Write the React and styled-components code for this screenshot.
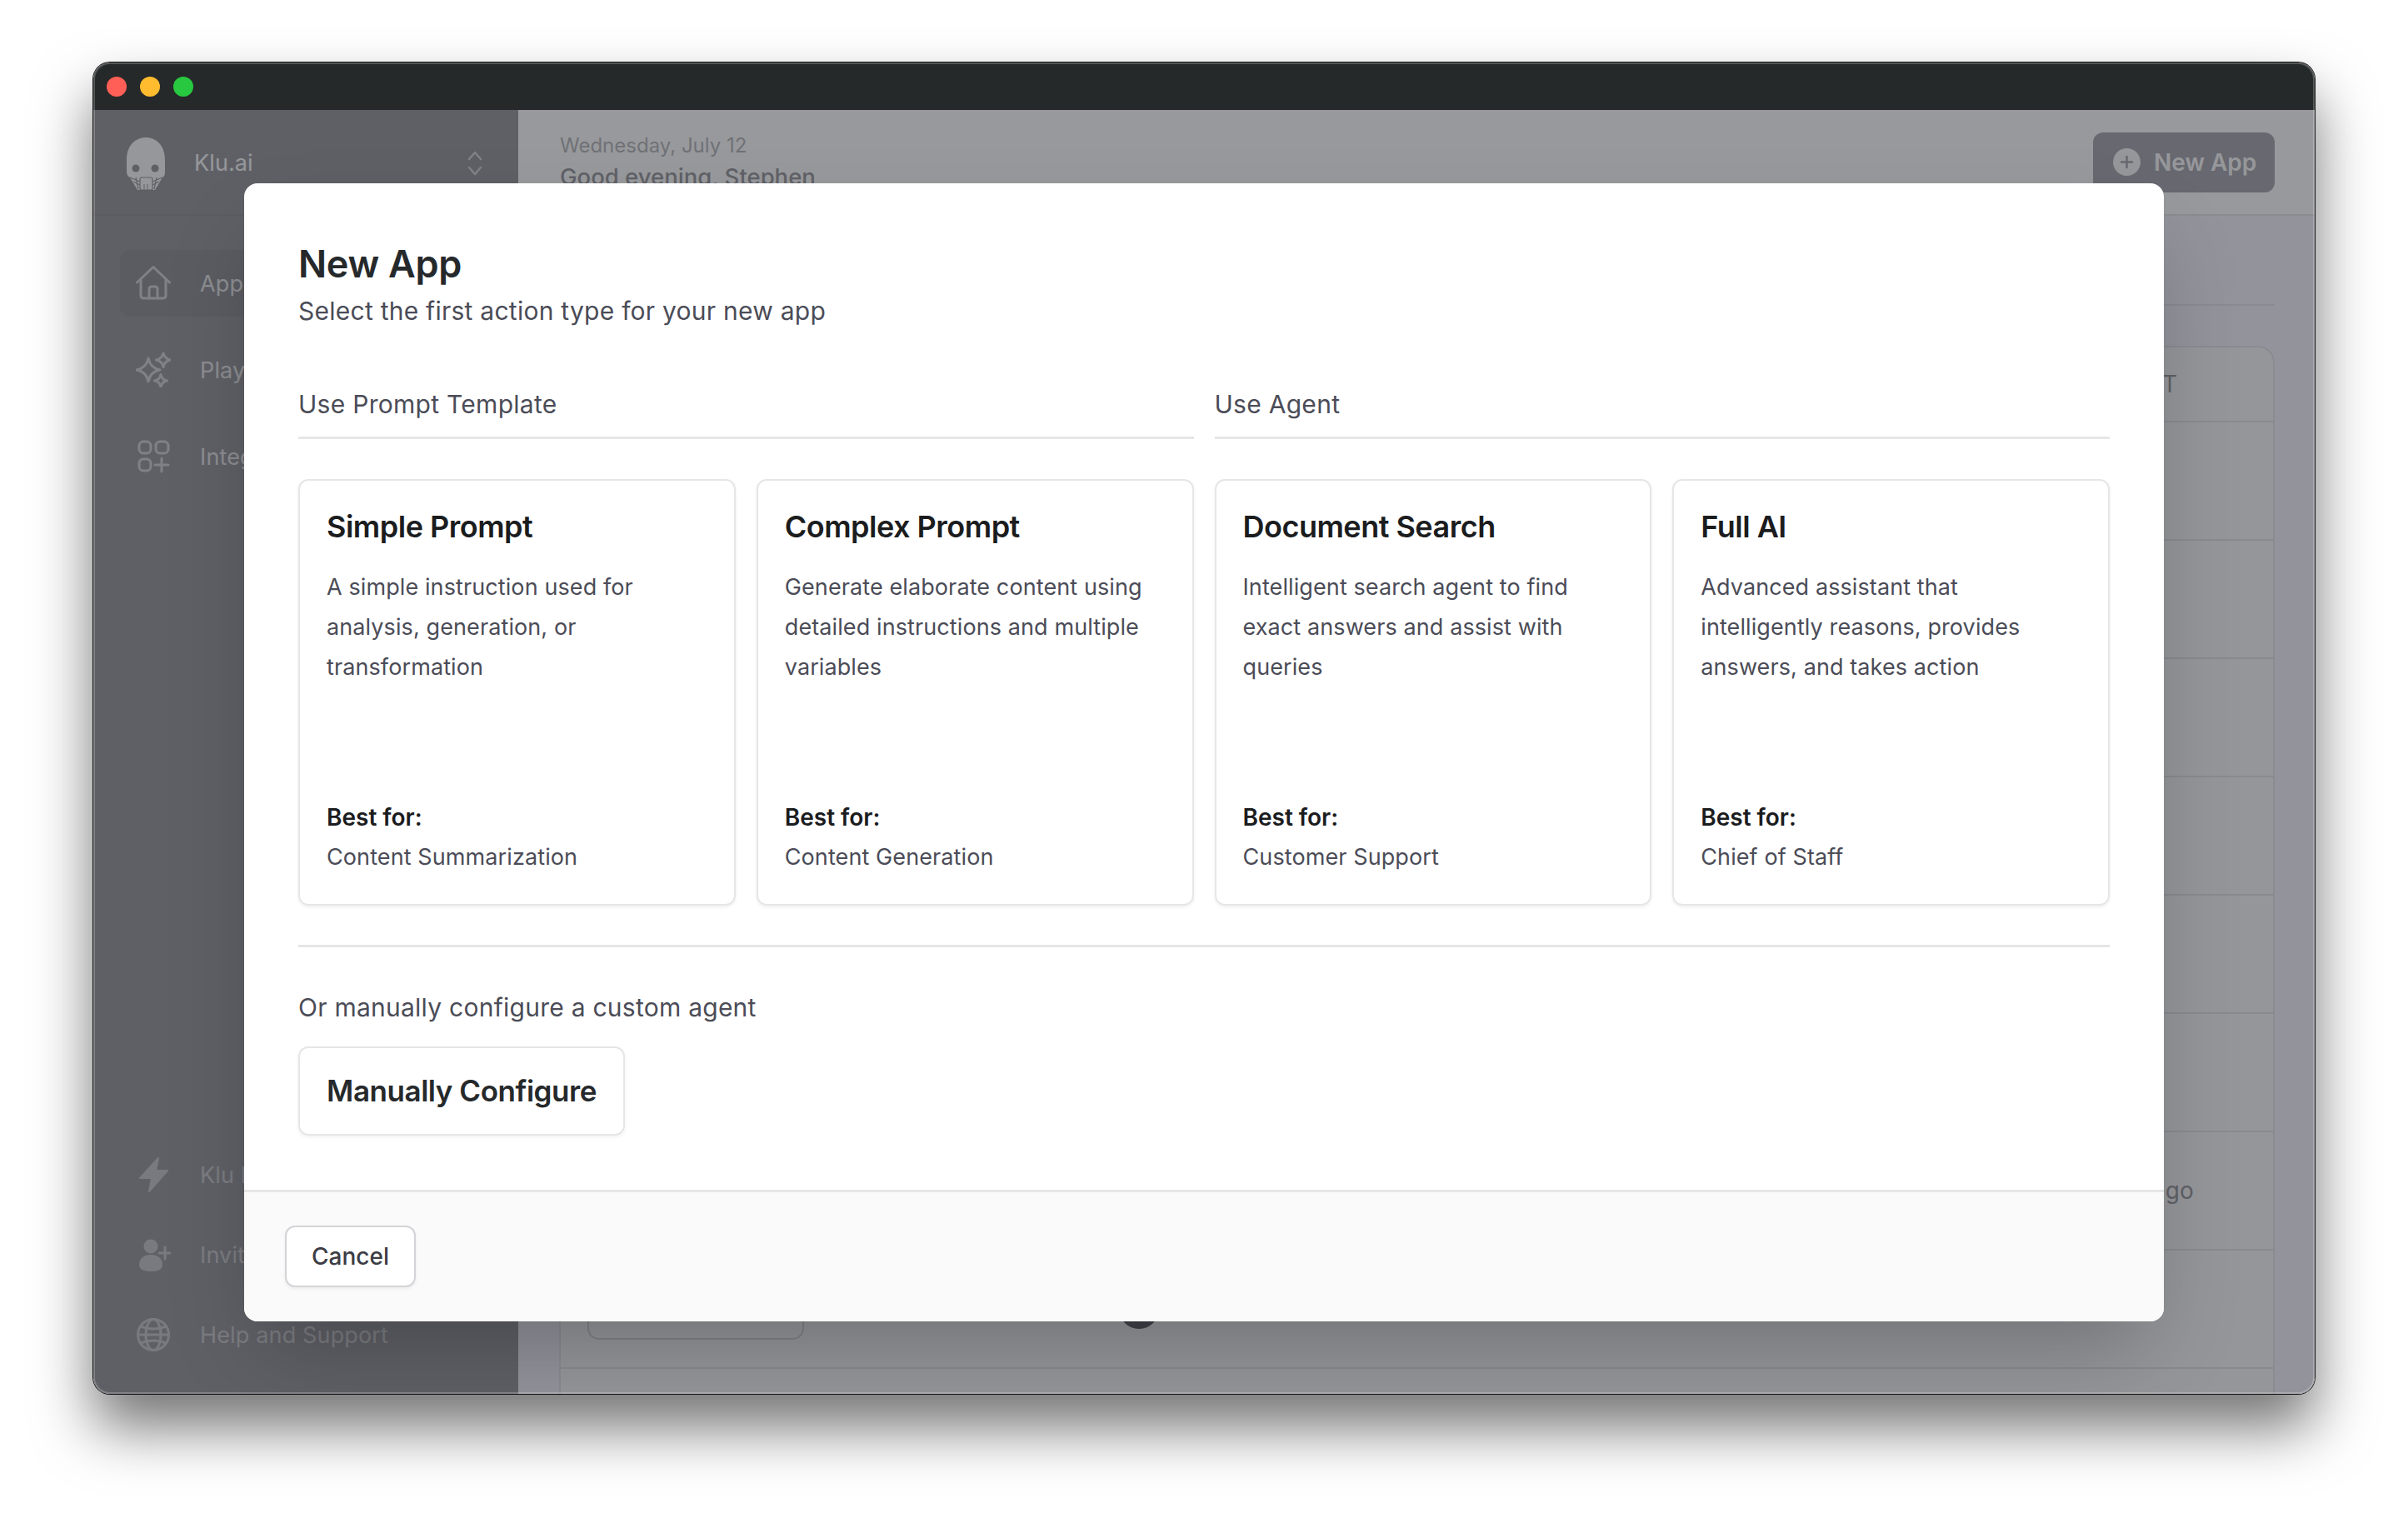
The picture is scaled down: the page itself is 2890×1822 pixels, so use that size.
import React from 'react';
import styled, { createGlobalStyle } from 'styled-components';

const GlobalStyle = createGlobalStyle`
  html, body {
    margin: 0;
    background: #fff;
    font-family: Inter, "Noto Sans", sans-serif;
    -webkit-font-smoothing: antialiased;
  }
  * {
    box-sizing: border-box;
  }
`;

const Page = styled.div`
  width: 2890px;
  height: 1822px;
  padding: 75px 112px 0;
  overflow: hidden;
  background: #fff;
`;

const Window = styled.div`
  position: relative;
  display: flex;
  flex-direction: column;
  width: 2666px;
  height: 1598px;
  border-radius: 20px;
  box-shadow: 0 0 0 1px #111, 0 40px 70px rgba(0, 0, 0, 0.55);

  &::after {
    content: '';
    position: absolute;
    inset: 0;
    border-radius: 20px;
    box-shadow: inset 0 0 0 2px rgba(255, 255, 255, 0.22);
    pointer-events: none;
  }
`;

const TitleBar = styled.div`
  display: flex;
  align-items: center;
  flex: 0 0 57px;
  gap: 16px;
  padding-left: 16px;
  background: #26292a;
  border-radius: 20px 20px 0 0;
`;

const Light = styled.span`
  width: 24px;
  height: 24px;
  border-radius: 50%;
  background: ${props => props.color};
`;

const Body = styled.div`
  position: relative;
  display: flex;
  flex: 1;
  min-height: 0;
  overflow: hidden;
  border-radius: 0 0 20px 20px;
`;

const Sidebar = styled.aside`
  display: flex;
  flex-direction: column;
  flex: 0 0 510px;
  background: #8c8d92;
`;

const Brand = styled.div`
  display: flex;
  align-items: center;
  flex: 0 0 127px;
  padding: 2px 40px 0 35px;
  border-bottom: 2px solid #85868b;
`;

const BrandName = styled.span`
  margin-left: 22px;
  font-size: 27px;
  letter-spacing: 0.1px;
  color: #fafafa;
`;

const Chevrons = styled.svg`
  margin-left: auto;
  margin-right: 2px;
`;

const Nav = styled.nav`
  display: flex;
  flex: 1;
  flex-direction: column;
  justify-content: space-between;
  padding: 41px 32px 31px;
`;

const NavGroup = styled.div`
  display: flex;
  flex-direction: column;
  gap: ${props => props.gap}px;
`;

const NavItem = styled.div`
  display: flex;
  align-items: center;
  gap: 35px;
  height: 80px;
  padding-left: 19px;
  border-radius: 12px;
  font-size: 27px;
  letter-spacing: 0.15px;
  white-space: nowrap;
  color: ${props => (props.muted ? '#c4c5c9' : '#e6e6e9')};
  background: ${props => (props.active ? '#83848a' : 'transparent')};
`;

const Icon = styled.svg`
  flex: 0 0 42px;
  width: 42px;
  height: 42px;
  color: ${props => (props.muted ? '#bfc0c5' : '#cecfd3')};
`;

const Main = styled.main`
  display: flex;
  flex: 1;
  flex-direction: column;
  min-width: 0;
  background: #f2f3fc;
`;

const Header = styled.header`
  display: flex;
  align-items: center;
  justify-content: space-between;
  flex: 0 0 127px;
  padding: 0 48px 0 50px;
  background: #fff;
  border-bottom: 2px solid #e4e5e8;
`;

const Greeting = styled.div`
  display: flex;
  flex-direction: column;
  gap: 2px;
`;

const DateLine = styled.span`
  font-size: 24px;
  line-height: 32px;
  color: #aeafb3;
`;

const Hello = styled.span`
  font-size: 27.5px;
  font-weight: 500;
  line-height: 38px;
  color: #8e8f95;
`;

const NewAppButton = styled.div`
  display: flex;
  align-items: center;
  gap: 16px;
  width: 218px;
  height: 72px;
  padding-left: 24px;
  border-radius: 12px;
  font-size: 28px;
  font-weight: 600;
  color: #fafafa;
  background: #9c9da6;
`;

const PlusBadge = styled.svg`
  flex: 0 0 33px;
`;

const TabsRow = styled.div`
  flex: 0 0 108px;
  margin: 0 48px 0 49px;
  border-bottom: 2px solid #e2e3e8;
`;

const Table = styled.div`
  flex: 1;
  margin: 48px 48px 0 49px;
  background: #f8f8fa;
  border: 2px solid #e2e3e8;
  border-bottom: 0;
  border-radius: 20px 20px 0 0;
`;

const Row = styled.div`
  display: flex;
  align-items: center;
  height: ${props => props.height}px;
  padding-left: ${props => props.pad || 0}px;
  border-bottom: 2px solid #e0e1e6;
  white-space: nowrap;
`;

const CellText = styled.span`
  font-size: 28px;
  color: #8e8f95;
`;

const RowButton = styled.div`
  width: 260px;
  height: 74px;
  border: 2px solid #d2d3d8;
  border-radius: 14px;
`;

const Avatar = styled.div`
  width: 48px;
  height: 48px;
  margin-left: 378px;
  border-radius: 50%;
  background: #4f5056;
`;

const Overlay = styled.div`
  position: absolute;
  inset: 0;
  display: flex;
  align-items: center;
  justify-content: center;
  background: rgba(50, 51, 58, 0.5);
`;

const Modal = styled.div`
  display: flex;
  flex-direction: column;
  width: 2304px;
  height: 1366px;
  overflow: hidden;
  border-radius: 16px;
  background: #fff;
  box-shadow: 0 50px 100px -24px rgba(0, 0, 0, 0.25);
`;

const ModalBody = styled.div`
  flex: 1;
  padding: 69px 65px 0;
`;

const Title = styled.h1`
  margin: 0;
  font-size: 45px;
  font-weight: 600;
  line-height: 56px;
  letter-spacing: -0.3px;
  color: #26292b;
`;

const Subtitle = styled.p`
  margin: 6px 0 0;
  font-size: 30px;
  line-height: 44px;
  letter-spacing: 0.25px;
  color: #4b4c57;
`;

const Sections = styled.div`
  display: grid;
  grid-template-columns: 1fr 1fr;
  gap: 25px;
  margin-top: 60px;
`;

const SectionLabel = styled.div`
  height: 72px;
  padding-top: 8px;
  border-bottom: 3px solid #e6e6e6;
  font-size: 30px;
  line-height: 44px;
  letter-spacing: 0.28px;
  color: #4b4c57;
`;

const Cards = styled.div`
  display: grid;
  grid-template-columns: repeat(4, 1fr);
  gap: 25px;
  margin-top: 48px;
`;

const Card = styled.div`
  display: flex;
  flex-direction: column;
  height: 512px;
  padding: 33px 32px 32px;
  border: 2px solid #e6e6e6;
  border-radius: 12px;
  box-shadow: 0 2px 4px rgba(0, 0, 0, 0.06);
`;

const CardTitle = styled.h2`
  margin: 0;
  font-size: 36px;
  font-weight: 600;
  line-height: 44px;
  letter-spacing: -0.5px;
  color: #1b1c1e;
`;

const CardText = styled.p`
  margin: 27px 0 0;
  font-size: 27px;
  line-height: 48px;
  letter-spacing: 0.1px;
  color: #4b4c57;
`;

const BestFor = styled.div`
  margin-top: auto;
  font-size: 27px;
  line-height: 48px;
  letter-spacing: 0.1px;
  color: #4b4c57;

  strong {
    display: block;
    font-size: 28px;
    font-weight: 600;
    letter-spacing: 0;
    color: #1b1c1e;
  }
`;

const Divider = styled.hr`
  margin: 47px 0 0;
  border: 0;
  border-top: 3px solid #e6e6e6;
`;

const ManualLabel = styled.p`
  margin: 50px 0 0;
  font-size: 30px;
  line-height: 44px;
  letter-spacing: 0.25px;
  color: #4b4c57;
`;

const ManualButton = styled.div`
  display: inline-flex;
  align-items: center;
  justify-content: center;
  width: 392px;
  height: 107px;
  margin-top: 25px;
  border: 2px solid #e6e6e6;
  border-radius: 12px;
  box-shadow: 0 2px 4px rgba(0, 0, 0, 0.06);
  font-size: 35px;
  font-weight: 600;
  letter-spacing: -0.45px;
  color: #26292b;
`;

const Footer = styled.footer`
  display: flex;
  align-items: center;
  flex: 0 0 158px;
  padding-left: 49px;
  background: #fafafa;
  border-top: 3px solid #e6e6e6;
`;

const CancelButton = styled.div`
  display: flex;
  align-items: center;
  justify-content: center;
  width: 157px;
  height: 74px;
  border: 2px solid #d4d4d8;
  border-radius: 12px;
  background: #fff;
  box-shadow: 0 2px 4px rgba(0, 0, 0, 0.06);
  font-size: 28px;
  font-weight: 500;
  color: #3c3c44;
`;

const star = (x, y, r) => {
  const k = r * 0.16;
  return `M${x} ${y - r}Q${x + k} ${y - k} ${x + r} ${y}Q${x + k} ${y + k} ${x} ${y + r}Q${x - k} ${y + k} ${x - r} ${y}Q${x - k} ${y - k} ${x} ${y - r}Z`;
};

const stroke = { fill: 'none', stroke: 'currentColor', strokeWidth: 3, strokeLinecap: 'round', strokeLinejoin: 'round' };

const HomeIcon = () => (
  <Icon viewBox="0 0 42 42">
    <path {...stroke} d="M1.5 20L21 1.5L40.5 20M6 15.5V35.5Q6 39 9.5 39H32.5Q36 39 36 35.5V15.5" />
    <path {...stroke} d="M16 39V28Q16 25 19 25H23Q26 25 26 28V39" />
  </Icon>
);

const SparkIcon = () => (
  <Icon viewBox="0 0 42 42">
    <path {...stroke} d={star(15, 21, 14)} />
    <path {...stroke} d={star(33, 9, 8.5)} />
    <path {...stroke} d={star(30, 34, 7.5)} />
  </Icon>
);

const GridIcon = () => (
  <Icon viewBox="0 0 42 42">
    <g {...stroke}>
      <rect x="4" y="3" width="14" height="14" rx="5" />
      <rect x="24" y="3" width="15" height="14" rx="5" />
      <rect x="4" y="24" width="14" height="14" rx="5" />
      <path d="M23 31H39M31 23V39" />
    </g>
  </Icon>
);

const BoltIcon = () => (
  <Icon muted viewBox="0 0 42 42">
    <path fill="currentColor" stroke="currentColor" strokeWidth="2" strokeLinejoin="round" d="M27 1L5 25H19L16 41L38 16H24Z" />
  </Icon>
);

const InviteIcon = () => (
  <Icon muted viewBox="0 0 42 42">
    <circle cx="18" cy="11" r="8.5" fill="currentColor" />
    <path fill="currentColor" d="M4 33C4 25 10 21 18 21C26 21 32 25 32 33C32 39 26 41 18 41C10 41 4 39 4 33Z" />
    <path {...stroke} d="M28 19H42M35 12V26" />
  </Icon>
);

const GlobeIcon = () => (
  <Icon muted viewBox="0 0 42 42">
    <g {...stroke}>
      <circle cx="21" cy="21" r="18.5" />
      <ellipse cx="21" cy="21" rx="9" ry="18.5" />
      <path d="M5.5 11Q21 17 36.5 11M2.5 21H39.5M5.5 31Q21 25 36.5 31" />
    </g>
  </Icon>
);

const SkullLogo = () => (
  <svg width="64" height="80" viewBox="8 0 64 80">
    <path fill="#fafafa" d="M13 36C13 18 24 9 36 9C48 9 59 18 59 36V50C59 54 58 56 56 57L47 72H26L17 57C15 56 13 54 13 50Z" />
    <circle cx="24" cy="46" r="4.5" fill="#8c8d92" />
    <circle cx="47" cy="46" r="4.5" fill="#8c8d92" />
    <path fill="none" stroke="#8c8d92" strokeWidth="1.2" d="M17 57L29 62M56 57L44 62M21 62L29 66M52 62L44 66M24 57L27 71M49 57L46 71" />
    <rect x="29" y="57" width="15" height="15" rx="2" fill="#fafafa" stroke="#8c8d92" strokeWidth="1.2" />
    <path fill="none" stroke="#8c8d92" strokeWidth="1" d="M34 65V72M38 65V72" />
  </svg>
);

const cards = [
  {
    title: 'Simple Prompt',
    text: 'A simple instruction used for analysis, generation, or transformation',
    best: 'Content Summarization',
  },
  {
    title: 'Complex Prompt',
    text: 'Generate elaborate content using detailed instructions and multiple variables',
    best: 'Content Generation',
  },
  {
    title: 'Document Search',
    text: 'Intelligent search agent to find exact answers and assist with queries',
    best: 'Customer Support',
  },
  {
    title: 'Full AI',
    text: 'Advanced assistant that intelligently reasons, provides answers, and takes action',
    best: 'Chief of Staff',
  },
];

const App = () => (
  <Page>
    <GlobalStyle />
    <Window>
      <TitleBar>
        <Light color="#ff5f57" />
        <Light color="#febc2e" />
        <Light color="#28c840" />
      </TitleBar>
      <Body>
        <Sidebar>
          <Brand>
            <SkullLogo />
            <BrandName>Klu.ai</BrandName>
            <Chevrons width="20" height="30" viewBox="0 0 20 30">
              <path fill="none" stroke="#cfd0d4" strokeWidth="2.5" strokeLinecap="round" strokeLinejoin="round" d="M3 10L10 2L17 10M3 20L10 28L17 20" />
            </Chevrons>
          </Brand>
          <Nav>
            <NavGroup gap={24}>
              <NavItem active>
                <HomeIcon />
                Apps
              </NavItem>
              <NavItem>
                <SparkIcon />
                Playground
              </NavItem>
              <NavItem>
                <GridIcon />
                Integrations
              </NavItem>
            </NavGroup>
            <NavGroup gap={16}>
              <NavItem muted>
                <BoltIcon />
                Klu Pro
              </NavItem>
              <NavItem muted>
                <InviteIcon />
                Invite
              </NavItem>
              <NavItem muted>
                <GlobeIcon />
                Help and Support
              </NavItem>
            </NavGroup>
          </Nav>
        </Sidebar>
        <Main>
          <Header>
            <Greeting>
              <DateLine>Wednesday, July 12</DateLine>
              <Hello>Good evening, Stephen</Hello>
            </Greeting>
            <NewAppButton>
              <PlusBadge width="33" height="33" viewBox="0 0 33 33">
                <circle cx="16.5" cy="16.5" r="16.5" fill="#fafafa" />
                <path stroke="#9c9da6" strokeWidth="2.5" strokeLinecap="round" d="M16.5 10V23M10 16.5H23" />
              </PlusBadge>
              New App
            </NewAppButton>
          </Header>
          <TabsRow />
          <Table>
            <Row height={90} pad={1922}>
              <CellText>T</CellText>
            </Row>
            <Row height={142} />
            <Row height={142} />
            <Row height={142} />
            <Row height={142} />
            <Row height={142} />
            <Row height={142} />
            <Row height={142} pad={1910}>
              <CellText>ago</CellText>
            </Row>
            <Row height={142} pad={32}>
              <RowButton />
              <Avatar />
            </Row>
          </Table>
        </Main>
        <Overlay>
          <Modal>
            <ModalBody>
              <Title>New App</Title>
              <Subtitle>Select the first action type for your new app</Subtitle>
              <Sections>
                <SectionLabel>Use Prompt Template</SectionLabel>
                <SectionLabel>Use Agent</SectionLabel>
              </Sections>
              <Cards>
                {cards.map(card => (
                  <Card key={card.title}>
                    <CardTitle>{card.title}</CardTitle>
                    <CardText>{card.text}</CardText>
                    <BestFor>
                      <strong>Best for:</strong>
                      {card.best}
                    </BestFor>
                  </Card>
                ))}
              </Cards>
              <Divider />
              <ManualLabel>Or manually configure a custom agent</ManualLabel>
              <ManualButton>Manually Configure</ManualButton>
            </ModalBody>
            <Footer>
              <CancelButton>Cancel</CancelButton>
            </Footer>
          </Modal>
        </Overlay>
      </Body>
    </Window>
  </Page>
);

export default App;
